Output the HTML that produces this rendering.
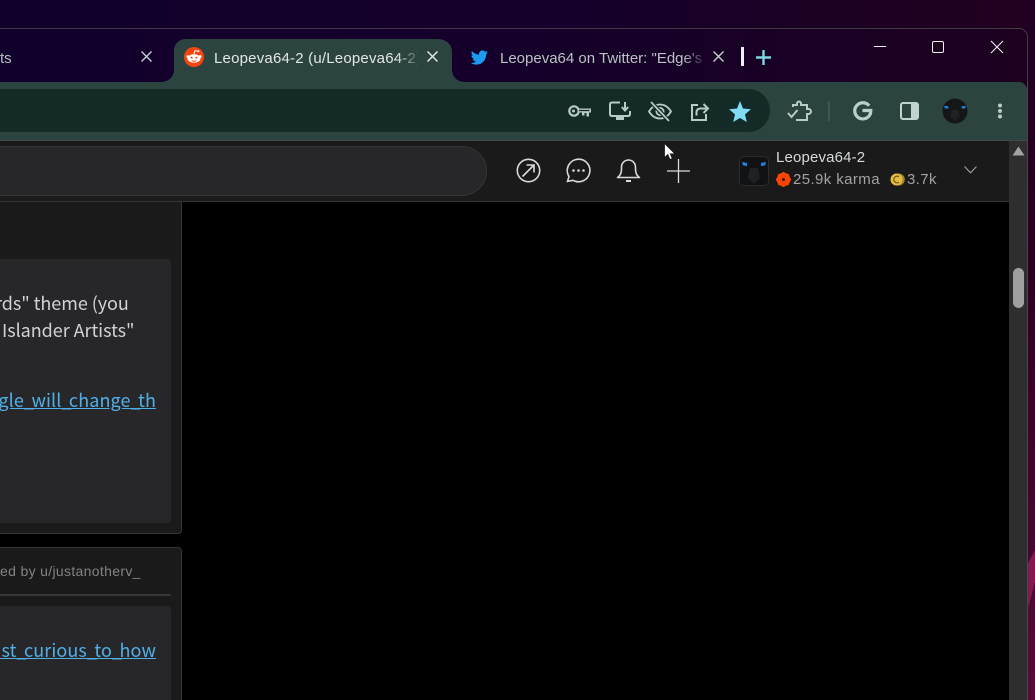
<!DOCTYPE html>
<html><head><meta charset="utf-8">
<style>
html,body{margin:0;padding:0;width:1035px;height:700px;overflow:hidden;background:#12002a}
*{box-sizing:border-box}
#root{position:absolute;left:0;top:0;width:1035px;height:700px;overflow:hidden}
.a{position:absolute}
.t{position:absolute;white-space:nowrap;font-family:"Liberation Sans",sans-serif}
.n{position:absolute;white-space:nowrap;font-family:"Noto Sans CJK JP","Liberation Sans",sans-serif}
.n i{font-style:normal;letter-spacing:-2.6px}
svg{position:absolute;overflow:visible}
</style></head>
<body>
<div id="root">
<div class="a" style="left:0;top:0;width:1035px;height:700px;background:linear-gradient(90deg,#12002c 0%,#14002a 55%,#1d0022 85%,#22001f 100%)"></div>
<div class="a" style="left:1027px;top:0;width:8px;height:700px;background:linear-gradient(180deg,#1f0024 0%,#2a001f 35%,#44082f 75%,#560c36 100%)"></div>
<svg style="left:1027px;top:550px" width="8" height="62"><polygon points="0,15 8,0 8,32 0,62" fill="#851a4e"/></svg>

<!-- window -->
<div class="a" style="left:-10px;top:28px;width:1038px;height:672px;border:1px solid #413a45;border-bottom:none;border-radius:0 9px 0 0;background:linear-gradient(90deg,#12002c 0%,#14002a 50%,#1d0020 100%);overflow:hidden"></div>

<!-- toolbar -->
<div class="a" style="left:0;top:82px;width:1027px;height:59px;background:#2c4440;border-radius:0 8px 0 0"></div>
<div class="a" style="left:-30px;top:89px;width:800px;height:43px;background:#132a26;border-radius:22px"></div>

<!-- inactive tab 1 -->
<div class="t" style="left:0;top:50px;font-size:15px;color:#b5bdbd">ts</div>
<svg style="left:141px;top:51px" width="11" height="11"><path d="M.5 .5L10.500 10.500M10.500 .5L.5 10.500" stroke="#c8cfcf" stroke-width="1.400"/></svg>

<!-- active tab -->
<svg style="left:160px;top:39px" width="306" height="44"><path d="M0 43C9 43 14 38 14 30V12C14 5 19 0 26 0H278C285 0 292 5 292 12V30C292 38 297 43 306 43Z" fill="#2c4440"/></svg>
<svg style="left:184px;top:47px" width="20" height="20" viewBox="0 0 20 20"><circle cx="10" cy="10" r="10" fill="#f4450f"/><ellipse cx="10" cy="11.500" rx="6.500" ry="4.200" fill="#fff"/><circle cx="3.900" cy="9.500" r="1.400" fill="#fff"/><circle cx="16.100" cy="9.500" r="1.400" fill="#fff"/><circle cx="7.600" cy="10.800" r="1" fill="#f4450f"/><circle cx="12.400" cy="10.800" r="1" fill="#f4450f"/><path d="M10 7L11 3.600L14 4.300" stroke="#fff" fill="none"/><circle cx="14.400" cy="4.300" r="1" fill="#fff"/><path d="M7.800 13.500Q10 14.900 12.200 13.500" stroke="#f4450f" fill="none"/></svg>
<div class="a" style="left:214px;top:48px;width:203px;height:20px;overflow:hidden;-webkit-mask-image:linear-gradient(90deg,#000 90%,rgba(0,0,0,.2));mask-image:linear-gradient(90deg,#000 90%,rgba(0,0,0,.2))"><div class="t" style="left:0;top:2px;font-size:15px;color:#e2e6e5;letter-spacing:.2px">Leopeva64-2 (u/Leopeva64-2) - Reddit</div></div>
<svg style="left:427px;top:51px" width="11" height="11"><path d="M.5 .5L10.500 10.500M10.500 .5L.5 10.500" stroke="#e8ecec" stroke-width="1.400"/></svg>

<!-- twitter tab -->
<svg style="left:471px;top:50px" width="17" height="15" viewBox="0 0 24 20"><path d="M23.600 2.400c-.9.4-1.800.7-2.800.8 1-.6 1.800-1.600 2.100-2.700-.9.6-2 1-3.100 1.200C18.900.7 17.600 0 16.200 0c-2.700 0-4.900 2.200-4.900 4.900 0 .4 0 .8.100 1.100C7.400 5.800 3.800 3.900 1.400.9.900 1.700.700 2.500.700 3.400c0 1.700.900 3.200 2.200 4.100-.8 0-1.600-.2-2.200-.6v.1c0 2.400 1.700 4.400 3.900 4.800-.4.100-.8.200-1.300.2-.3 0-.6 0-.9-.1.600 2 2.400 3.400 4.600 3.400C5.300 17 3.200 17.800.9 17.800c-.4 0-.8 0-1.200-.1C2 19.200 4.600 20 7.500 20c9 0 13.900-7.500 13.900-13.900v-.6c1-.7 1.800-1.600 2.200-3.100z" fill="#1d9bf0"/></svg>
<div class="a" style="left:500px;top:48px;width:203px;height:20px;overflow:hidden;-webkit-mask-image:linear-gradient(90deg,#000 90%,rgba(0,0,0,.2));mask-image:linear-gradient(90deg,#000 90%,rgba(0,0,0,.2))"><div class="t" style="left:0;top:2px;font-size:15px;color:#b9c3c3">Leopeva64 on Twitter: "Edge's new look</div></div>
<svg style="left:713px;top:51px" width="11" height="11"><path d="M.5 .5L10.500 10.500M10.500 .5L.5 10.500" stroke="#c8cfcf" stroke-width="1.400"/></svg>
<div class="a" style="left:741px;top:47px;width:3px;height:19px;background:#f0f0f0"></div>
<svg style="left:756px;top:50px" width="15" height="15"><path d="M7.500 0V15M0 7.500H15" stroke="#7fd6e4" stroke-width="2.400"/></svg>

<!-- window controls -->
<div class="a" style="left:874px;top:46px;width:12px;height:1px;background:#f0f0f0"></div>
<div class="a" style="left:932px;top:41px;width:12px;height:12px;border:1.300px solid #f0f0f0;border-radius:2px"></div>
<svg style="left:991px;top:41px" width="12" height="12"><path d="M0 0L12 12M12 0L0 12" stroke="#f0f0f0" stroke-width="1.100"/></svg>

<!-- omnibox icons -->
<svg style="left:568px;top:104px" width="24" height="15" viewBox="0 0 24 15"><circle cx="6" cy="7" r="4.700" fill="none" stroke="#b9c9c6" stroke-width="2.200"/><circle cx="5.500" cy="7" r="1.500" fill="#b9c9c6"/><path d="M10.500 4.500H23V8.500H21V12.500H18.500V9H16.500V11.500H14V8.500H10.500" fill="#b9c9c6"/><path d="M11 6.500H21.500" stroke="#132a26" stroke-width="1.300"/></svg>
<svg style="left:609px;top:101px" width="22" height="20" viewBox="0 0 22 20"><path d="M11 1.500H3Q1 1.500 1 3.500V13Q1 15 3 15H19Q21 15 21 13V10" fill="none" stroke="#b9c9c6" stroke-width="2"/><path d="M7 17.500H15" stroke="#b9c9c6" stroke-width="3"/><path d="M16 1V8.500M12.800 6L16 9.500L19.200 6" fill="none" stroke="#b9c9c6" stroke-width="2"/></svg>
<svg style="left:648px;top:101px" width="24" height="21" viewBox="0 0 24 21"><path d="M1 10.500C4 5.500 8 3.500 12 3.500S20 5.500 23 10.500C20 15.500 16 17.500 12 17.500S4 15.500 1 10.500Z" fill="none" stroke="#b9c9c6" stroke-width="1.800"/><circle cx="12" cy="10.500" r="3.600" fill="none" stroke="#b9c9c6" stroke-width="1.800"/><path d="M3 1L21 20" stroke="#132a26" stroke-width="4"/><path d="M3 1L21 20" stroke="#b9c9c6" stroke-width="1.800"/></svg>
<svg style="left:690px;top:101px" width="20" height="20" viewBox="0 0 20 20"><path d="M8 4H2V19H16V13" fill="none" stroke="#b9c9c6" stroke-width="2"/><path d="M6.500 14.500V11.500Q6.500 7.500 10.500 7.500H17.500M13.500 3L18 7.500L13.500 12" fill="none" stroke="#b9c9c6" stroke-width="2"/></svg>
<svg style="left:729px;top:101px" width="22" height="21" viewBox="0 0 22 21"><path d="M11 0L14 7.500L22 8.200L16 13.400L17.800 21L11 17L4.200 21L6 13.400L0 8.200L8 7.500Z" fill="#7fdcf2"/></svg>

<!-- toolbar right icons -->
<svg style="left:787px;top:100px" width="24" height="23" viewBox="0 0 24 23"><path d="M6 7V5H10V3.500A2 2 0 0 1 14 3.500V5H20V9H21.500A2.200 2.200 0 0 1 21.500 14H20V20H9" fill="none" stroke="#b9c9c6" stroke-width="2"/><path d="M1 13L4.500 17L10.500 10" fill="none" stroke="#b9c9c6" stroke-width="2"/></svg>
<div class="a" style="left:828px;top:101px;width:2px;height:20px;background:#41584f"></div>
<svg style="left:852px;top:100px" width="20" height="21" viewBox="0 0 21 21"><path d="M18 5.500A8.500 8.500 0 1 0 18.500 15.500Q19.700 13.500 19.700 10.500H11" fill="none" stroke="#b9cfca" stroke-width="3.400"/></svg>
<svg style="left:900px;top:102px" width="19" height="18" viewBox="0 0 19 18"><rect x="1" y="1" width="17" height="16" rx="2" fill="none" stroke="#c1d3cf" stroke-width="2"/><rect x="11" y="1" width="7" height="16" fill="#c1d3cf"/></svg>
<svg style="left:942px;top:98px" width="26" height="26" viewBox="0 0 26 26"><circle cx="13" cy="13" r="12.500" fill="#141618"/><path d="M8 18L13 23L18 18L16 12H10Z" fill="#1f2123"/><path d="M2 8L6 8L6.500 10.500L3 10.500Z" fill="#1e7fd6"/><path d="M24 8L20 8L19.500 10.500L23 10.500Z" fill="#1e7fd6"/></svg>
<svg style="left:997px;top:103px" width="6" height="16"><circle cx="3" cy="2.500" r="2" fill="#b9c9c6"/><circle cx="3" cy="8" r="2" fill="#b9c9c6"/><circle cx="3" cy="13.500" r="2" fill="#b9c9c6"/></svg>

<!-- page -->
<div class="a" style="left:0;top:141px;width:1027px;height:559px;background:#000"></div>
<div class="a" style="left:0;top:140px;width:1027px;height:1px;background:#404a47"></div>
<div class="a" style="left:0;top:141px;width:1009px;height:60px;background:#1a1a1b"></div>
<div class="a" style="left:0;top:201px;width:1009px;height:1px;background:#343536"></div>
<div class="a" style="left:-40px;top:146px;width:527px;height:50px;background:#272729;border:1px solid #343536;border-radius:25px"></div>

<!-- header icons -->
<svg style="left:516px;top:158px" width="25" height="25" viewBox="0 0 25 25"><circle cx="12.500" cy="12.500" r="11.200" fill="none" stroke="#d7dadc" stroke-width="1.600"/><path d="M6.500 18.500L18 7M10.500 7H18V14.500" fill="none" stroke="#d7dadc" stroke-width="1.600"/></svg>
<svg style="left:566px;top:158px" width="25" height="25" viewBox="0 0 25 25"><path d="M12.500 1.200A11.300 11.300 0 1 1 7 22.300L1.500 23.300L3 18.500A11.300 11.300 0 0 1 12.500 1.200Z" fill="none" stroke="#d7dadc" stroke-width="1.600"/><circle cx="7.500" cy="12.500" r="1.300" fill="#d7dadc"/><circle cx="12.500" cy="12.500" r="1.300" fill="#d7dadc"/><circle cx="17.500" cy="12.500" r="1.300" fill="#d7dadc"/></svg>
<svg style="left:616px;top:158px" width="25" height="25" viewBox="0 0 25 25"><path d="M1.500 19.500Q5.500 17 5.500 11V9A7 7 0 0 1 19.500 9V11Q19.500 17 23.500 19.500Z" fill="none" stroke="#d7dadc" stroke-width="1.600" stroke-linejoin="round"/><path d="M10 23H15" stroke="#d7dadc" stroke-width="2"/></svg>
<svg style="left:667px;top:159px" width="23" height="24"><path d="M11.500 0V24M0 12H23" stroke="#d7dadc" stroke-width="1.300"/></svg>

<!-- cursor -->
<svg style="left:664px;top:143px" width="12" height="18" viewBox="0 0 12 18"><path d="M0.500 0.500V14.500L3.800 11.500L6 16.500L8.300 15.500L6.200 10.800H10.800Z" fill="#fff" stroke="#111" stroke-width=".7"/></svg>

<!-- user -->
<svg style="left:739px;top:156px" width="30" height="30" viewBox="0 0 30 30"><rect x=".5" y=".5" width="29" height="29" rx="4" fill="#111213" stroke="#2c2c2d"/><path d="M9 22L15 28L21 22L19 12H11Z" fill="#1f2123"/><path d="M3 6L8 7L8 10L4 9.500Z" fill="#1e86e0"/><path d="M27 6L22 7L22 10L26 9.500Z" fill="#1e86e0"/></svg>
<div class="t" style="left:776px;top:149px;font-size:15px;color:#d7dadc;letter-spacing:.15px">Leopeva64-2</div>
<svg style="left:776px;top:172px" width="15" height="15" viewBox="0 0 15 15"><circle cx="7.500" cy="7.500" r="5.200" fill="none" stroke="#ff4500" stroke-width="3.200"/><path d="M7.500 0V15M0 7.500H15M2.300 2.300L12.700 12.700M12.700 2.300L2.300 12.700" stroke="#ff4500" stroke-width="2.200"/><circle cx="7.500" cy="7.500" r="1.500" fill="#1a1a1b"/></svg>
<div class="t" style="left:793px;top:171px;font-size:15px;color:#a0a2a3;letter-spacing:.4px">25.9k karma</div>
<svg style="left:890px;top:172px" width="15" height="15" viewBox="0 0 15 15"><circle cx="8.800" cy="7.500" r="6" fill="#a8842c"/><circle cx="6.500" cy="7.500" r="6" fill="#e4bc45"/><path d="M9 4.800A3.300 3.300 0 1 0 9 10.200" fill="none" stroke="#7a5c14" stroke-width="1.300"/></svg>
<div class="t" style="left:907px;top:171px;font-size:15px;color:#a0a2a3;letter-spacing:.4px">3.7k</div>
<svg style="left:964px;top:166px" width="13" height="8"><path d="M.5 .5L6.500 6.800L12.500 .5" fill="none" stroke="#9a9c9d" stroke-width="1.200"/></svg>

<!-- cards -->
<div class="a" style="left:-10px;top:202px;width:192px;height:332px;background:#1a1a1b;border:1px solid #343536;border-top:none;border-radius:0 0 4px 0"></div>
<div class="a" style="left:-10px;top:259px;width:181px;height:264px;background:#272729;border-radius:4px"></div>
<div class="n" style="left:-5px;top:291px;font-size:18px;line-height:24px;color:#d0d2d3;letter-spacing:-.05px">rds" theme (you</div>
<div class="n" style="left:2px;top:318px;font-size:18px;line-height:24px;color:#d0d2d3;letter-spacing:-.05px">Islander Artists"</div>
<div class="n" style="right:879px;top:388px;font-size:18px;line-height:24px;color:#4fb0e8;text-decoration:underline;letter-spacing:.1px">ogle<i>_</i>will<i>_</i>change<i>_</i>th</div>

<div class="a" style="left:-10px;top:547px;width:192px;height:160px;background:#1a1a1b;border:1px solid #343536;border-radius:4px"></div>
<div class="t" style="left:0;top:563px;font-size:14px;color:#818384;letter-spacing:.33px">ed by u/justanotherv_</div>
<div class="a" style="left:0;top:594px;width:171px;height:2px;background:#343536"></div>
<div class="a" style="left:-10px;top:606px;width:181px;height:100px;background:#272729;border-radius:4px"></div>
<div class="n" style="right:879px;top:638px;font-size:18px;line-height:24px;color:#4fb0e8;text-decoration:underline;letter-spacing:.1px">ust<i>_</i>curious<i>_</i>to<i>_</i>how</div>

<!-- scrollbar -->
<div class="a" style="left:1009px;top:141px;width:18px;height:559px;background:#2e2e2e"></div>
<svg style="left:1012px;top:146px" width="13" height="10"><path d="M6.500 .5L12.500 9.500H.5Z" fill="#a3a3a3"/></svg>
<div class="a" style="left:1013px;top:268px;width:11px;height:40px;background:#a0a0a0;border-radius:5.500px"></div>
<div class="a" style="left:1027px;top:82px;width:1px;height:618px;background:#4a4450"></div>
</div>
</body></html>
